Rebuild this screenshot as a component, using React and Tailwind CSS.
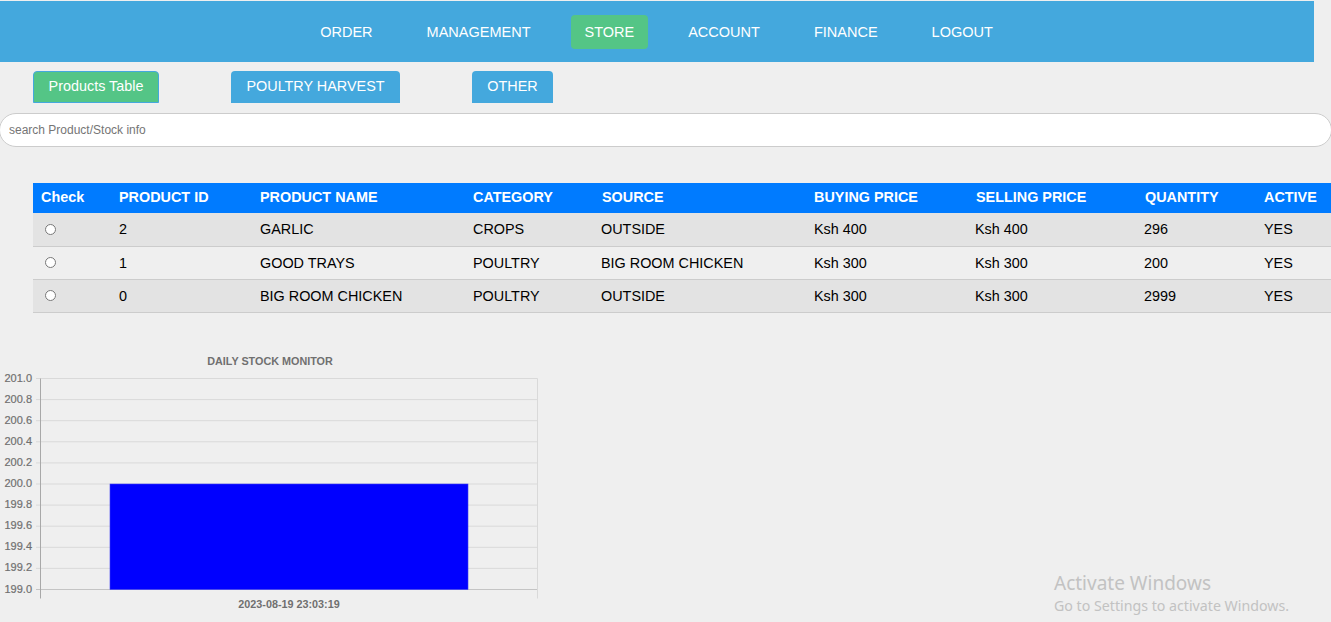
import React from "react";

const NAV = ["ORDER", "MANAGEMENT", "STORE", "ACCOUNT", "FINANCE", "LOGOUT"];
const HEAD = ["Check", "PRODUCT ID", "PRODUCT NAME", "CATEGORY", "SOURCE", "BUYING PRICE", "SELLING PRICE", "QUANTITY", "ACTIVE"];
const ROWS = [
  ["2", "GARLIC", "CROPS", "OUTSIDE", "Ksh 400", "Ksh 400", "296", "YES"],
  ["1", "GOOD TRAYS", "POULTRY", "BIG ROOM CHICKEN", "Ksh 300", "Ksh 300", "200", "YES"],
  ["0", "BIG ROOM CHICKEN", "POULTRY", "OUTSIDE", "Ksh 300", "Ksh 300", "2999", "YES"],
];
const TICKS = ["201.0", "200.8", "200.6", "200.4", "200.2", "200.0", "199.8", "199.6", "199.4", "199.2", "199.0"];

function Chart() {
  const top = 33.5;
  const step = 21.1;
  return (
    <svg width="560" height="270" viewBox="0 0 560 270" className="block" style={{ fontFamily: '"Liberation Sans", Arial, sans-serif' }}>
      <text x="270" y="20" textAnchor="middle" fontSize="10.8" fontWeight="700" fill="#707070">DAILY STOCK MONITOR</text>
      {TICKS.map((t, i) => {
        const y = top + i * step;
        return (
          <g key={t}>
            <line x1="36" x2="537.5" y1={y} y2={y} stroke={i === 10 ? "#c4c4c4" : "#d9d9d9"} strokeWidth="1" />
            <text x="32" y={y + 3} textAnchor="end" fontSize="11" fill="#707070" stroke="#707070" strokeWidth="0.2">{t}</text>
          </g>
        );
      })}
      <line x1="40.5" x2="40.5" y1={top} y2="253.5" stroke="#a8a8a8" />
      <line x1="537.5" x2="537.5" y1={top} y2="253.5" stroke="#d9d9d9" />
      <rect x="110" y={top + 5 * step} width="358" height={5 * step} fill="#0000ff" stroke="#3d3df0" strokeWidth="0.6" />
      <text x="289" y="263" textAnchor="middle" fontSize="10.8" fontWeight="700" fill="#707070">2023-08-19 23:03:19</text>
    </svg>
  );
}

export default function App() {
  return (
    <div className="relative h-[622px] w-[1331px] overflow-hidden bg-[#efefef] font-['Liberation_Sans',Arial,sans-serif] text-black">
      <nav className="mt-px flex h-[61px] w-[1314px] items-center justify-center gap-[26px] bg-[#44a8dd] pr-[1px]">
        {NAV.map((n) => (
          <a key={n} className={`flex h-[34px] items-center rounded-[4px] px-[14px] pt-[2px] text-[14.5px] text-white ${n === "STORE" ? "bg-[#54c586]" : ""}`}>{n}</a>
        ))}
      </nav>

      <div className="mt-[9px] flex gap-[72px] pl-[33px]">
        <button className="h-[32px] w-[126px] rounded-t-[4px] border border-[#44a8dd] bg-[#54c586] text-[14.4px] text-white">Products Table</button>
        <button className="h-[32px] w-[169px] rounded-t-[4px] bg-[#44a8dd] text-[14.4px] text-white">POULTRY HARVEST</button>
        <button className="h-[32px] w-[81px] rounded-t-[4px] bg-[#44a8dd] text-[14.4px] text-white">OTHER</button>
      </div>

      <input
        placeholder="search Product/Stock info"
        className="-ml-px mt-[10px] block h-[34px] w-[1333px] rounded-[17px] border border-[#cccccc] bg-white px-[9px] text-[12px] text-[#555] placeholder:text-[#757575] outline-none"
      />

      <div className="ml-[33px] mt-[36px] w-[1340px]">
        <table className="w-[1340px] table-fixed border-collapse text-[14.4px]">
          <colgroup>
            <col className="w-[78px]" />
            <col className="w-[141px]" />
            <col className="w-[213px]" />
            <col className="w-[128px]" />
            <col className="w-[213px]" />
            <col className="w-[161px]" />
            <col className="w-[169px]" />
            <col className="w-[119px]" />
            <col />
          </colgroup>
          <thead>
            <tr className="h-[30px] bg-[#007bff] text-white">
              {HEAD.map((h, j) => (
                <th key={h} className={`text-left font-bold ${j === 4 || j >= 6 ? "pl-[9px]" : "pl-[8px]"}`}>{h}</th>
              ))}
            </tr>
          </thead>
          <tbody>
            {ROWS.map((r, i) => (
              <tr key={r[0]} className={`h-[33px] border-b border-[#cccccc] ${i % 2 === 0 ? "bg-[#e3e3e3]" : "bg-[#efefef]"}`}>
                <td className="pl-[8px]">
                  <input type="radio" name="p" className="ml-[4px] block h-[11px] w-[11px]" />
                </td>
                {r.map((c, j) => (
                  <td key={j} className={`pt-[2px] ${j === 7 ? "pl-[9px]" : "pl-[8px]"}`}>{c}</td>
                ))}
              </tr>
            ))}
          </tbody>
        </table>
      </div>

      <div className="mt-[32px]">
        <Chart />
      </div>

      <div className="absolute left-[1054px] top-[570px] font-['Noto_Sans','Open_Sans',sans-serif] text-[#c2c2c2]">
        <div className="text-[19px] leading-[26px]">Activate Windows</div>
        <div className="text-[14.2px] leading-[20px]">Go to Settings to activate Windows.</div>
      </div>
    </div>
  );
}
